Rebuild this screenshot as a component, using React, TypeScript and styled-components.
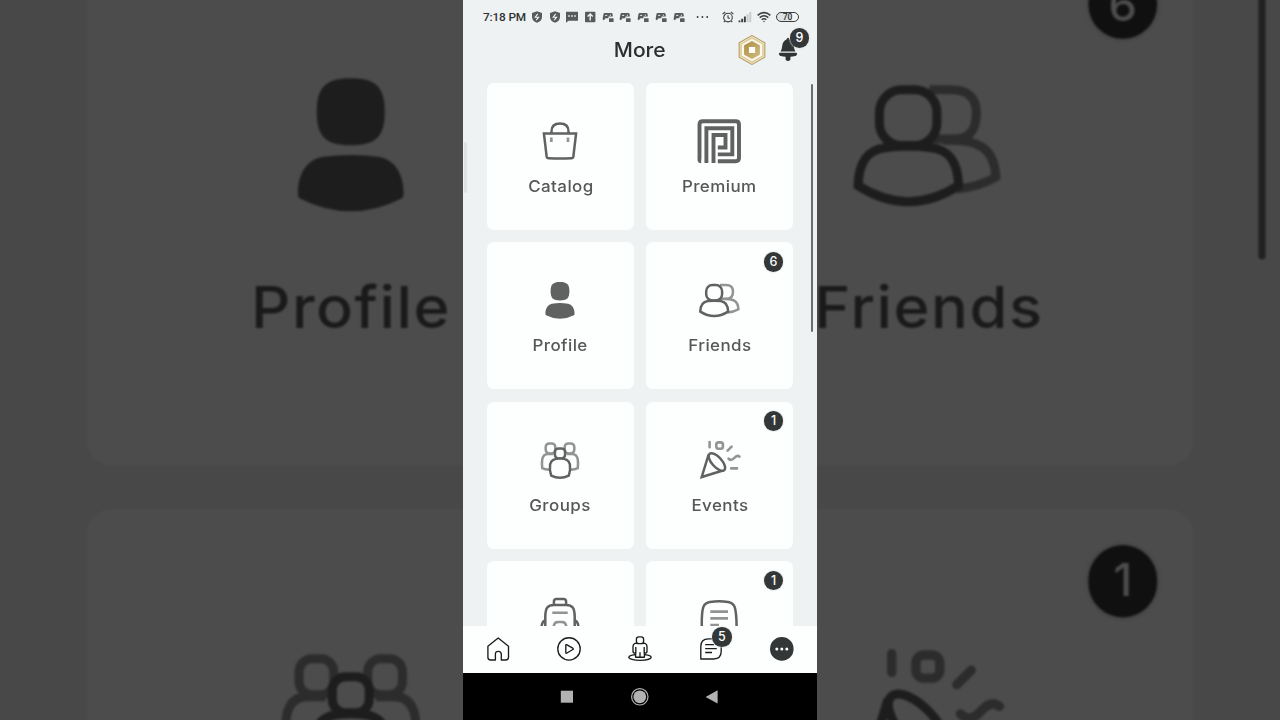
import React from 'react';
import styled, { createGlobalStyle } from 'styled-components';

const GlobalStyle = createGlobalStyle`
  * {
    box-sizing: border-box;
  }

  body {
    margin: 0;
    overflow: hidden;
    background: #484848;
    font-family: Inter, 'Liberation Sans', sans-serif;
  }
`;

const Stage = styled.div`
  position: relative;
  display: flex;
  justify-content: center;
  width: 1280px;
  height: 720px;
  overflow: hidden;
`;

// Enlarged, dimmed copy of the menu that fills the sides
const Backdrop = styled.div`
  position: absolute;
  top: -66px;
  left: 0;
  width: 354px;
  height: 220px;
  padding: 0 24px;
  background: #f1f1f1;
  transform: scale(3.616);
  transform-origin: 0 0;
  filter: grayscale(0.8) brightness(0.3) blur(0.35px);
`;

const Screen = styled.div`
  position: relative;
  display: flex;
  flex-direction: column;
  width: 354px;
  height: 720px;
  background: #eff2f3;
  overflow: hidden;
`;

const StatusBar = styled.div`
  display: flex;
  align-items: center;
  height: 34px;
  padding: 0 18px 0 20px;
  color: #2e3131;
`;

const Clock = styled.span`
  width: 48px;
  font-family: Roboto, 'Liberation Sans', sans-serif;
  font-size: 11.8px;
  font-weight: 500;
  letter-spacing: -0.15px;
  white-space: nowrap;
`;

const Notifications = styled.div`
  display: flex;
  gap: 5.7px;
  color: #575b5b;
`;

const SystemIcons = styled.div`
  display: flex;
  align-items: center;
  gap: 4.5px;
  margin-left: auto;
`;

const Battery = styled.span`
  width: 23px;
  height: 10px;
  margin-left: 1px;
  border: 1px solid #3b3e3e;
  border-radius: 5px;
  background: linear-gradient(90deg, #dfe2e2 70%, #f4f6f6 70%);
  font-family: Roboto, 'Liberation Sans', sans-serif;
  font-size: 8.5px;
  font-weight: 500;
  line-height: 8.5px;
  text-align: center;
`;

const Header = styled.header`
  display: grid;
  grid-template-columns: 1fr auto 1fr;
  align-items: center;
  height: 34px;
  padding: 0 19px 2px;
`;

const Title = styled.h1`
  grid-column: 2;
  margin: 0 0 1px;
  color: #2c2f2f;
  font-size: 20px;
  font-weight: 500;
  transform: scaleX(1.05);
`;

const HeaderActions = styled.div`
  display: flex;
  justify-content: flex-end;
  align-items: center;
  gap: 12px;
`;

const BellButton = styled.div`
  position: relative;
  display: flex;
`;

const Content = styled.main`
  position: relative;
  flex: 1;
  min-height: 0;
  padding: 15px 24px 0;
  overflow: hidden;
`;

const Grid = styled.div`
  display: grid;
  grid-template-columns: repeat(2, 147px);
  grid-auto-rows: 147px;
  gap: 12.3px 12px;
`;

const Card = styled.div`
  position: relative;
  display: flex;
  flex-direction: column;
  align-items: center;
  padding-top: 33px;
  border-radius: 7px;
  background: #fdfefe;

  & > svg {
    margin-left: -1px;
  }
`;

const CardLabel = styled.span`
  margin-top: 10px;
  color: #565858;
  font-size: 16px;
  font-weight: 500;
  line-height: 20px;
  letter-spacing: 0.4px;
  transform: scaleX(1.06);
`;

const Badge = styled.span<{ $top: number; $right: number }>`
  position: absolute;
  top: ${({ $top }) => $top}px;
  right: ${({ $right }) => $right}px;
  width: 19.6px;
  height: 19.6px;
  border-radius: 50%;
  background: #333737;
  box-shadow: 0 0 1.5px 0.5px #dde1e1;
  color: #fdfefe;
  font-size: 12.5px;
  font-weight: 500;
  line-height: 19.6px;
  text-align: center;
`;

const ScrollThumb = styled.div<{ $top: number; $height: number }>`
  position: absolute;
  top: ${({ $top }) => $top}px;
  right: 4px;
  width: 2px;
  height: ${({ $height }) => $height}px;
  border-radius: 1px;
  background: #6b6e6e;
`;

const EdgeHandle = styled.div`
  position: absolute;
  top: 74px;
  left: 1px;
  width: 3px;
  height: 51px;
  border-radius: 2px;
  background: #dfe2e2;
`;

const TabBar = styled.nav`
  display: grid;
  grid-template-columns: repeat(5, 1fr);
  place-items: center;
  height: 47px;
  padding-bottom: 1px;
  background: #fdfefe;
`;

const Tab = styled.div`
  position: relative;
  display: flex;
`;

const SystemNav = styled.div`
  display: flex;
  justify-content: center;
  align-items: center;
  gap: 56.3px;
  height: 47px;
  background: #000;
`;

const Icon = styled.svg`
  display: block;
  flex: none;
  overflow: visible;
`;

const dark = '#606262';
const light = '#929494';
const paper = '#fdfefe';

interface IconFrameProps {
  children: React.ReactNode;
}

const CardIcon: React.FC<IconFrameProps> = ({ children }) => (
  <Icon width="50" height="50" viewBox="0 0 50 50" fill="none" stroke={dark} strokeWidth="2.5">
    {children}
  </Icon>
);

const CatalogIcon = () => (
  <CardIcon>
    <path d="M16.5 17V15.5C16.5 10 19.5 7.5 25 7.5S33.5 10 33.5 15.5V17" />
    <path d="M8.9 17.4H41.1L38.4 40.2Q38.1 42.1 36.3 42.2Q25 43 13.7 42.2Q11.9 42.1 11.6 40.2Z" />
    <path d="M16.3 21.5V26M33 21.5V26" stroke={light} strokeWidth="2.7" />
  </CardIcon>
);

const PremiumIcon = () => (
  <CardIcon>
    <g strokeWidth="3.9">
      <path d="M7.2 45.2Q5.5 45.2 5.5 43.4V8.5Q5.5 5.2 8.8 5.2H41.7Q45 5.2 45 8.5V42Q45 45.2 41.7 45.2H23.8" />
      <path d="M12.4 47V12.2H38.3V38.4H23.8" />
      <path d="M19.5 47V19H31.5V31.5H23.8" />
    </g>
  </CardIcon>
);

const ProfileIcon = () => (
  <CardIcon>
    <g fill={dark} stroke="none">
      <path d="M25 6.9C32 6.9 34.4 9.4 34.4 16.2S32 25.4 25 25.4S15.6 23 15.6 16.2S18 6.9 25 6.9Z" />
      <path d="M10.4 38.8C10.4 32.8 13.2 29.5 17 28.7Q25 27.5 33 28.7C36.8 29.5 39.6 32.8 39.6 38.8Q39.7 39.8 38.9 40.2Q25 47.2 11.1 40.2Q10.3 39.8 10.4 38.8Z" />
    </g>
  </CardIcon>
);

const FriendsIcon = () => (
  <CardIcon>
    <g transform="translate(0 .5)">
      <g stroke={light}>
        <path d="M26 9.6H32Q39 9.6 39 16Q39 23.2 33 23.2H27" />
        <path d="M30 23.6C40 23 44 26 44.4 33.7Q40 36.4 33.5 37" />
      </g>
      <rect x="12.2" y="9.6" width="15.9" height="15.4" rx="6.2" fill={paper} />
      <path
        d="M6.3 36.1C6.5 29 9.2 26.2 13.8 25.6Q20.2 24.8 26.6 25.6C31.2 26.2 33.9 29 34.1 36.1Q20.2 45 6.3 36.1Z"
        fill={paper}
      />
    </g>
  </CardIcon>
);

const GroupsIcon = () => (
  <CardIcon>
    <g stroke={light}>
      <rect x="10.7" y="8.4" width="9.6" height="10" rx="3.6" />
      <rect x="29.7" y="8.4" width="9.6" height="10" rx="3.6" />
      <path d="M14.5 34.8Q10 34.6 7.2 33.2Q6.6 28 7.3 24Q8.4 18.9 13 18.9H18" />
      <path d="M35.5 34.8Q40 34.6 42.8 33.2Q43.4 28 42.7 24Q41.6 18.9 37 18.9H32" />
    </g>
    <rect x="19.9" y="13.4" width="10.2" height="10" rx="3.7" fill={paper} />
    <path
      d="M16.2 40.6Q14.2 35 15.1 29.5C16 24.8 19 23.6 25 23.6S34 24.8 34.9 29.5Q35.8 35 33.8 40.6Q25 44.8 16.2 40.6Z"
      fill={paper}
    />
  </CardIcon>
);

const EventsIcon = () => (
  <CardIcon>
    <path d="M14.6 19.6L7.7 42L29.8 35.2" strokeLinejoin="miter" />
    <ellipse cx="22.9" cy="27" rx="11" ry="4.9" transform="rotate(48 22.9 27)" fill={paper} />
    <g stroke={light} strokeWidth="2.6" strokeLinecap="round">
      <path d="M15.6 7V12.2M33.6 15.6L37.6 11.6M37.2 33.4H43" />
      <rect x="22.3" y="7.4" width="6.6" height="6.4" rx="2.2" />
      <path d="M34.6 23.7Q37.3 26.3 40.2 23T45.4 21.6" />
    </g>
  </CardIcon>
);

const BackpackIcon = () => (
  <CardIcon>
    <path d="M18.9 10.5V7.5Q18.9 4.9 21.5 4.9H28.5Q31.1 4.9 31.1 7.5V10.5" />
    <path d="M10.3 40V22C10.5 14 12.5 11 19 11H31C37.5 11 39.5 14 39.7 22V40" />
    <path d="M10.3 26.5Q6.8 27.5 6.6 33M39.7 26.5Q43.2 27.5 43.4 33" />
    <path d="M17.3 18.8H32.7M18.6 33Q19 28 23 28H27Q31 28 31.4 33" stroke={light} />
  </CardIcon>
);

const NoteIcon = () => (
  <CardIcon>
    <path d="M7.8 34C7.6 24 7.8 18 9.2 13.3Q10.8 8.7 16 8Q25 6.6 34 8Q39.2 8.7 40.8 13.3C42.2 18 42.6 24 42.6 34" />
    <path d="M16.3 17.7H34M16.3 24.4H34M16.3 31H25" stroke={light} strokeWidth="2.7" />
  </CardIcon>
);

const ShieldIcon = () => (
  <Icon width="12" height="12" viewBox="0 0 12 12">
    <path d="M6 .2L11 2V6Q11 10 6 11.8Q1 10 1 6V2Z" fill="currentColor" />
    <path d="M6.8 2.8L4.2 6.2H7.6L5.2 9.2" fill="none" stroke="#eff2f3" strokeWidth="1.1" />
  </Icon>
);

const MessageIcon = () => (
  <Icon width="12" height="12" viewBox="0 0 12 12">
    <path d="M0 .8H12V9.8H2.5L0 11.8Z" fill="currentColor" />
    <path d="M2.2 5H3.8M5.2 5H6.8M8.2 5H9.8" stroke="#eff2f3" strokeWidth="1.5" />
  </Icon>
);

const UploadIcon = () => (
  <Icon width="12" height="12" viewBox="0 0 12 12">
    <rect x="1" y=".8" width="10.4" height="10.4" rx=".8" fill="currentColor" />
    <path d="M6.2 9.4V3M3.6 5.6L6.2 3L8.8 5.6" fill="none" stroke="#eff2f3" strokeWidth="1.4" />
  </Icon>
);

const GamepadIcon = () => (
  <Icon width="12" height="12" viewBox="0 0 12 12">
    <path
      d="M2.6 2H9.4Q10.4 2 10.6 3.2L10.9 5.6H6.4V7.2H3.6L1.8 9.2Q.4 9.2.7 7.4L1.5 3Q1.7 2 2.6 2Z"
      fill="currentColor"
    />
    <path d="M3.2 4.4H5.2M7.8 4.2H9" stroke="#eff2f3" strokeWidth="1" />
    <rect x="7" y="7.2" width="4.6" height="3.8" rx=".5" fill="currentColor" />
  </Icon>
);

const DotsIcon = () => (
  <Icon width="14" height="12" viewBox="0 0 14 12" fill="currentColor">
    <circle cx="1.6" cy="6" r=".9" />
    <circle cx="6.4" cy="6" r=".9" />
    <circle cx="11.2" cy="6" r=".9" />
  </Icon>
);

const AlarmIcon = () => (
  <Icon width="12" height="12" viewBox="0 0 12 12" fill="none" stroke="#3b3e3e" strokeWidth="1.1">
    <circle cx="6" cy="6.6" r="4.3" />
    <path d="M6 4.2V6.8L7.8 7.6M.6 3.2L3.2 1M11.4 3.2L8.8 1M2.8 10L1.8 11.2M9.2 10L10.2 11.2" />
  </Icon>
);

const SignalIcon = () => (
  <Icon width="14" height="12" viewBox="0 0 14 12" strokeWidth="1.9">
    <path d="M1.5 11.2V9.4M4.2 11.2V7.8M6.9 11.2V5.4" stroke="#3b3e3e" />
    <path d="M9.6 11.2V3.2M12.3 11.2V1" stroke="#c6caca" />
  </Icon>
);

const WifiIcon = () => (
  <Icon width="14" height="12" viewBox="0 0 14 12" fill="none" stroke="#3b3e3e" strokeWidth="1.5">
    <path d="M.6 4.3Q7-1 13.4 4.3M2.7 6.6Q7 3 11.3 6.6M4.7 8.8Q7 6.8 9.3 8.8" />
    <circle cx="7" cy="10.5" r=".7" fill="#3b3e3e" stroke="none" />
  </Icon>
);

const RobuxIcon = () => (
  <Icon width="28" height="32" viewBox="0 0 28 32">
    <defs>
      <linearGradient id="gold" x1="0" y1="0" x2="1" y2="1">
        <stop offset="0" stopColor="#ad9048" />
        <stop offset="1" stopColor="#d0ba7e" />
      </linearGradient>
    </defs>
    <g strokeLinejoin="round">
      <path d="M14 1.6L26.8 8.8V23.2L14 30.4L1.2 23.2V8.8Z" fill="#fbf8ec" stroke="#b9a269" strokeWidth="1.2" />
      <path d="M14 3.7L25 9.9V22.1L14 28.3L3 22.1V9.9Z" fill="none" stroke="#dccb98" strokeWidth="1.6" />
      <path d="M14 8L20.9 11.9V20.1L14 24L7.1 20.1V11.9Z" fill="url(#gold)" stroke="url(#gold)" strokeWidth="2" />
    </g>
    <rect x="11" y="13" width="6.2" height="6" fill="#fffdf5" />
  </Icon>
);

const BellIcon = () => (
  <Icon width="20" height="26" viewBox="0 0 20 26" fill="#303434">
    <path d="M10 .8Q8.8.8 8.5 2.6Q4.6 4.2 4.2 9Q4 12.2 2.6 14.4H17.4Q16 12.2 15.8 9Q15.4 4.2 11.5 2.6Q11.2.8 10 .8Z" />
    <path d="M1.5 15.8H18.5Q20 17 18.2 18.7Q14.4 19.6 12.4 19.8V22.8Q10 25.4 7.6 22.8V19.8Q5.6 19.6 1.8 18.7Q0 17 1.5 15.8Z" />
  </Icon>
);

const TabIcon: React.FC<IconFrameProps> = ({ children }) => (
  <Icon
    width="28"
    height="28"
    viewBox="0 0 28 28"
    fill="none"
    stroke="#1b1d1d"
    strokeWidth="1.35"
    strokeLinejoin="round"
  >
    {children}
  </Icon>
);

const HomeIcon = () => (
  <TabIcon>
    <path d="M3.9 11.3L14.2 3L24.5 11.3V22.2Q24.5 25 21.7 25H17.3V19.2Q17.3 16.3 14.3 16.3T11.4 19.2V25H6.7Q3.9 25 3.9 22.2Z" />
  </TabIcon>
);

const PlayIcon = () => (
  <TabIcon>
    <circle cx="14" cy="13.9" r="11.2" />
    <path d="M10.8 10.4Q10.8 9.1 12 9.8L17.8 13.2Q18.8 13.9 17.8 14.5L12 18Q10.8 18.7 10.8 17.4Z" />
  </TabIcon>
);

const AvatarIcon = () => (
  <TabIcon>
    <ellipse cx="14" cy="22.3" rx="11.2" ry="3" />
    <path
      d="M10.7 8.2H17.3Q20.8 8.4 21 11.6V16.3Q21 18.2 18.4 18.2V22.2H9.6V18.2Q7 18.2 7 16.3V11.6Q7.2 8.4 10.7 8.2Z"
      fill={paper}
    />
    <rect x="10.4" y="1.8" width="7.2" height="6.8" rx="2.4" fill={paper} />
    <path d="M9.8 12V18.2M18.2 12V18.2M14 17.2V22.2" />
  </TabIcon>
);

const ChatIcon = () => (
  <TabIcon>
    <path d="M3.8 24V11.5Q3.8 3.8 11.5 3.8H16.5Q24.2 3.8 24.2 11.5V16.3Q24.2 24 16.5 24Z" />
    <path d="M8.2 9.6H17M8.2 13.6H19.8M8.2 17.5H15" />
  </TabIcon>
);

const MoreIcon = () => (
  <Icon width="28" height="28" viewBox="0 0 28 28">
    <circle cx="13.8" cy="13.9" r="11.8" fill="#333737" />
    <g fill="#fdfefe">
      <circle cx="8.8" cy="13.9" r="1.5" />
      <circle cx="13.8" cy="13.9" r="1.5" />
      <circle cx="18.8" cy="13.9" r="1.5" />
    </g>
  </Icon>
);

interface MenuItem {
  id: string;
  icon: React.ReactNode;
  label?: string;
  count?: number;
}

const items: MenuItem[] = [
  { id: 'catalog', label: 'Catalog', icon: <CatalogIcon /> },
  { id: 'premium', label: 'Premium', icon: <PremiumIcon /> },
  { id: 'profile', label: 'Profile', icon: <ProfileIcon /> },
  { id: 'friends', label: 'Friends', icon: <FriendsIcon />, count: 6 },
  { id: 'groups', label: 'Groups', icon: <GroupsIcon /> },
  { id: 'events', label: 'Events', icon: <EventsIcon />, count: 1 },
  { id: 'backpack', icon: <BackpackIcon /> },
  { id: 'notes', icon: <NoteIcon />, count: 1 },
];

// The second row is cut by the bottom edge above its labels
const backdropItems: MenuItem[] = [
  ...items.slice(2, 4),
  ...items.slice(4, 6).map((item) => ({ ...item, label: undefined })),
];

const MenuGrid: React.FC<{ entries: MenuItem[] }> = ({ entries }) => (
  <Grid>
    {entries.map((item) => (
      <Card key={item.id}>
        {item.icon}
        {item.label && <CardLabel>{item.label}</CardLabel>}
        {item.count && (
          <Badge $top={9.7} $right={9.7}>
            {item.count}
          </Badge>
        )}
      </Card>
    ))}
  </Grid>
);

const MoreScreen: React.FC = () => (
  <Screen>
    <StatusBar>
      <Clock>7:18 PM</Clock>
      <Notifications>
        <ShieldIcon />
        <ShieldIcon />
        <MessageIcon />
        <UploadIcon />
        {[0, 1, 2, 3, 4].map((n) => (
          <GamepadIcon key={n} />
        ))}
      </Notifications>
      <SystemIcons>
        <DotsIcon />
      </SystemIcons>
      <SystemIcons>
        <AlarmIcon />
        <SignalIcon />
        <WifiIcon />
        <Battery>70</Battery>
      </SystemIcons>
    </StatusBar>

    <Header>
      <Title>More</Title>
      <HeaderActions>
        <RobuxIcon />
        <BellButton>
          <BellIcon />
          <Badge $top={-9} $right={-11.3}>9</Badge>
        </BellButton>
      </HeaderActions>
    </Header>

    <Content>
      <MenuGrid entries={items} />
      <ScrollThumb $top={16} $height={248} />
      <EdgeHandle />
    </Content>

    <TabBar>
      <Tab>
        <HomeIcon />
      </Tab>
      <Tab>
        <PlayIcon />
      </Tab>
      <Tab>
        <AvatarIcon />
      </Tab>
      <Tab>
        <ChatIcon />
        <Badge $top={-8} $right={-7}>5</Badge>
      </Tab>
      <Tab>
        <MoreIcon />
      </Tab>
    </TabBar>

    <SystemNav>
      <Icon width="16" height="16" viewBox="0 0 16 16">
        <rect x="1.8" y="1.7" width="12.2" height="12" fill="#b2b2b2" />
      </Icon>
      <Icon width="18" height="18" viewBox="0 0 18 18">
        <circle cx="8.8" cy="8.8" r="8.2" fill="none" stroke="#b2b2b2" strokeWidth="1.2" />
        <circle cx="8.8" cy="8.8" r="6.4" fill="#b2b2b2" />
      </Icon>
      <Icon width="16" height="16" viewBox="0 0 16 16">
        <path d="M.6 8L12.6 1.2V14.6Z" fill="#b2b2b2" />
      </Icon>
    </SystemNav>
  </Screen>
);

const App: React.FC = () => (
  <>
    <GlobalStyle />
    <Stage>
      <Backdrop aria-hidden>
        <MenuGrid entries={backdropItems} />
        <ScrollThumb $top={0} $height={90} />
      </Backdrop>
      <MoreScreen />
    </Stage>
  </>
);

export default App;
